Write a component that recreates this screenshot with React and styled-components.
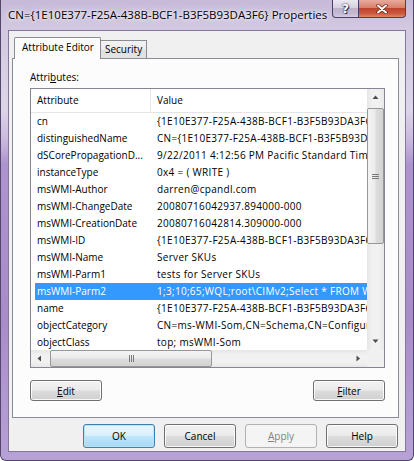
import React from 'react';
import styled, { createGlobalStyle, css } from 'styled-components';

const FONT = `"Open Sans", "Noto Sans", "Liberation Sans", sans-serif`;

const Global = createGlobalStyle`
  html, body { margin: 0; padding: 0; background: #fff; }
  body { font-family: ${FONT}; font-size: 10px; color: #000; }
  * { box-sizing: border-box; }
`;

const Window = styled.div`
  width: 414px;
  height: 461px;
  display: flex;
  flex-direction: column;
  padding: 0 7px 8px 7px;
  border: 1px solid #54466a;
  border-top: none;
  border-radius: 0 0 6px 6px;
  background: linear-gradient(
    180deg,
    #c6b9d9 0px,
    #d2c9e0 28px,
    #dcd5e8 110px,
    #c9b9de 140px,
    #ad93cf 165px,
    #a88cca 320px,
    #b7a2d6 461px
  );
`;

const TitleBar = styled.div`
  height: 30px;
  flex: none;
  display: flex;
  align-items: flex-start;
`;

const Title = styled.div`
  font-size: 11.5px;
  line-height: 30px;
  white-space: nowrap;
  color: #000;
  text-shadow: 0 0 6px rgba(255, 255, 255, 0.95), 0 0 3px rgba(255, 255, 255, 0.9);
`;

const Captions = styled.div`
  margin-left: auto;
  display: flex;
  height: 18px;
`;

const CaptionBtn = styled.div`
  height: 18px;
  display: flex;
  align-items: center;
  justify-content: center;
  border: 1px solid #4d3f63;
  border-top: none;
  ${(p) =>
    p.$close
      ? css`
          width: 47px;
          border-left: none;
          border-radius: 0 0 4px 0;
          background: linear-gradient(180deg, #e9a99b 0%, #d7806e 45%, #c0432d 50%, #cb5a3f 80%, #e08a66 100%);
        `
      : css`
          width: 27px;
          border-radius: 0 0 0 4px;
          background: linear-gradient(180deg, #ece8f2 0%, #d6d0e0 45%, #bdb3cd 50%, #c3b9d4 80%, #d5cde2 100%);
        `}
`;

const HelpGlyph = styled.span`
  font-family: "DejaVu Sans", sans-serif;
  font-weight: bold;
  font-size: 12px;
  line-height: 1;
  color: #fff;
  text-shadow: 0 0 1px #3d3350, 0 0 2px #3d3350, 1px 1px 0 #3d3350;
`;

const Client = styled.div`
  flex: 1;
  display: flex;
  flex-direction: column;
  background: #f0f0f0;
  border: 1px solid #84769c;
  padding: 6px 6px 3px 3px;
`;

const TabRow = styled.div`
  height: 21px;
  flex: none;
  display: flex;
  align-items: flex-end;
  padding-left: 2px;
`;

const Tab = styled.div`
  position: relative;
  border: 1px solid #898c95;
  border-bottom: none;
  white-space: nowrap;
  ${(p) =>
    p.$active
      ? css`
          z-index: 1;
          height: 22px;
          margin-bottom: -1px;
          padding: 0 6px 0 7px;
          line-height: 19px;
          background: #fcfcfc;
          border-radius: 2px 2px 0 0;
        `
      : css`
          height: 18px;
          padding: 0 4px 0 4px;
          line-height: 16px;
          border-left: none;
          background: linear-gradient(180deg, #f3f3f3 0%, #ebebeb 50%, #dedede 51%, #e4e4e4 100%);
        `}
`;

const Panel = styled.div`
  height: 360px;
  flex: none;
  display: flex;
  flex-direction: column;
  border: 1px solid #898c95;
  background: #fcfcfc;
  padding: 11px 13px 0 17px;
`;

const Label = styled.div`
  line-height: 14px;
  height: 14px;
`;

const ListView = styled.div`
  margin-top: 4px;
  height: 280px;
  flex: none;
  border: 1px solid #828790;
  display: grid;
  grid-template-columns: 1fr 17px;
  grid-template-rows: 1fr 17px;
  background: #fff;
`;

const ListContent = styled.div`
  overflow: hidden;
  min-width: 0;
  background: #fff;
`;

const Header = styled.div`
  height: 24px;
  display: flex;
  border-bottom: 1px solid #e5e5e5;
  line-height: 23px;
`;

const HeadCell = styled.div`
  padding-left: 6px;
  ${(p) =>
    p.$first
      ? css`
          width: 120px;
          flex: none;
          border-right: 1px solid #e5e5e5;
        `
      : css`
          flex: 1;
        `}
`;

const Row = styled.div`
  height: 17px;
  line-height: 17px;
  margin-left: 4px;
  display: flex;
  white-space: nowrap;
  ${(p) =>
    p.$selected &&
    css`
      background: #3399ff;
      color: #fff;
    `}
`;

const Cell = styled.div`
  overflow: hidden;
  ${(p) =>
    p.$first
      ? css`
          width: 116px;
          flex: none;
          padding-left: 2px;
        `
      : css`
          flex: 1;
          min-width: 0;
          padding-left: 6px;
          letter-spacing: 0.3px;
        `}
`;

const VScroll = styled.div`
  display: flex;
  flex-direction: column;
  background: linear-gradient(90deg, #e6e6e6 0%, #f1f1f1 30%, #f1f1f1 70%, #e8e8e8 100%);
`;

const HScroll = styled.div`
  display: flex;
  background: linear-gradient(180deg, #e6e6e6 0%, #f1f1f1 30%, #f1f1f1 70%, #e8e8e8 100%);
`;

const Arrow = styled.div`
  width: 17px;
  height: 17px;
  flex: none;
  display: flex;
  align-items: center;
  justify-content: center;
  ${(p) => p.$end && css`margin-${p.$dir === 'v' ? 'top' : 'left'}: auto;`}
`;

const Thumb = styled.div`
  flex: none;
  display: flex;
  align-items: center;
  justify-content: center;
  border: 1px solid #979797;
  border-radius: 2px;
  ${(p) =>
    p.$dir === 'v'
      ? css`
          margin: 2px 0 0 0;
          width: 17px;
          height: 136px;
          background: linear-gradient(90deg, #f4f4f4 0%, #ececec 45%, #dcdcdc 55%, #d2d2d2 100%);
        `
      : css`
          margin: 0 0 0 2px;
          height: 17px;
          width: 162px;
          background: linear-gradient(180deg, #f4f4f4 0%, #ececec 45%, #dcdcdc 55%, #d2d2d2 100%);
        `}
`;

const Corner = styled.div`
  background: #f0f0f0;
`;

const ActionRow = styled.div`
  margin-top: 12px;
  display: flex;
  justify-content: space-between;
`;

const Button = styled.button`
  font-family: ${FONT};
  font-size: 10px;
  color: #000;
  width: 72px;
  height: ${(p) => (p.$tall ? 24 : 21)}px;
  padding: 0;
  border-radius: 3px;
  border: 1px solid #707070;
  box-shadow: inset 0 0 0 1px rgba(255, 255, 255, 0.85);
  background: linear-gradient(180deg, #f2f2f2 0%, #ebebeb 48%, #dddddd 52%, #cfcfcf 100%);
  ${(p) =>
    p.$default &&
    css`
      border-color: #3c7fb1;
      box-shadow: inset 0 0 0 1px #b7e4fb;
      background: linear-gradient(180deg, #eaf6fd 0%, #d9f0fc 48%, #bee6fd 52%, #a7d9f5 100%);
    `}
  ${(p) =>
    p.disabled &&
    css`
      color: #838383;
      border-color: #adb2b5;
      box-shadow: none;
      background: #f4f4f4;
    `}
  u { text-decoration: underline; }
`;

const Footer = styled.div`
  margin-top: 6px;
  display: flex;
  justify-content: flex-end;
  gap: 9px;
  padding-right: 1px;
`;

const TriIcon = ({ dir }) => {
  const pts = {
    up: '0.5,4 3.5,0.5 6.5,4',
    down: '0.5,0.5 3.5,4 6.5,0.5',
    left: '4,0.5 0.5,3.5 4,6.5',
    right: '0.5,0.5 4,3.5 0.5,6.5',
  }[dir];
  const vert = dir === 'up' || dir === 'down';
  return (
    <svg width={vert ? 7 : 5} height={vert ? 5 : 7} viewBox={vert ? '0 0 7 5' : '0 0 5 7'}>
      <polygon points={pts} fill="#4d4d4d" />
    </svg>
  );
};

const Grip = ({ dir }) =>
  dir === 'v' ? (
    <svg width="7" height="7" viewBox="0 0 7 7">
      {[1, 3, 5].map((y) => (
        <line key={y} x1="0" x2="7" y1={y + 0.5} y2={y + 0.5} stroke="#7a7a7a" />
      ))}
    </svg>
  ) : (
    <svg width="7" height="7" viewBox="0 0 7 7">
      {[1, 3, 5].map((x) => (
        <line key={x} y1="0" y2="7" x1={x + 0.5} x2={x + 0.5} stroke="#7a7a7a" />
      ))}
    </svg>
  );

const rows = [
  ['cn', '{1E10E377-F25A-438B-BCF1-B3F5B93DA3F6}'],
  ['distinguishedName', 'CN={1E10E377-F25A-438B-BCF1-B3F5B93DA3F6},CN=SOM,CN=WMIPolicy,CN=System'],
  ['dSCorePropagationD...', '9/22/2011 4:12:56 PM Pacific Standard Time'],
  ['instanceType', '0x4 = ( WRITE )'],
  ['msWMI-Author', 'darren@cpandl.com'],
  ['msWMI-ChangeDate', '20080716042937.894000-000'],
  ['msWMI-CreationDate', '20080716042814.309000-000'],
  ['msWMI-ID', '{1E10E377-F25A-438B-BCF1-B3F5B93DA3F6}'],
  ['msWMI-Name', 'Server SKUs'],
  ['msWMI-Parm1', 'tests for Server SKUs'],
  ['msWMI-Parm2', '1;3;10;65;WQL;root\\CIMv2;Select * FROM Win32_OperatingSystem', true],
  ['name', '{1E10E377-F25A-438B-BCF1-B3F5B93DA3F6}'],
  ['objectCategory', 'CN=ms-WMI-Som,CN=Schema,CN=Configuration,DC=cpandl,DC=com'],
  ['objectClass', 'top; msWMI-Som'],
];

const CloseGlyph = () => (
  <svg width="12" height="10" viewBox="0 0 12 10">
    <path d="M2 1.5 L10 8.5 M10 1.5 L2 8.5" stroke="#6b1e12" strokeWidth="3.4" strokeLinecap="round" />
    <path d="M2 1.5 L10 8.5 M10 1.5 L2 8.5" stroke="#ffffff" strokeWidth="2" strokeLinecap="round" />
  </svg>
);

export default function App() {
  return (
    <>
      <Global />
      <Window>
        <TitleBar>
          <Title>CN={'{'}1E10E377-F25A-438B-BCF1-B3F5B93DA3F6{'}'} Properties</Title>
          <Captions>
            <CaptionBtn>
              <HelpGlyph>?</HelpGlyph>
            </CaptionBtn>
            <CaptionBtn $close>
              <CloseGlyph />
            </CaptionBtn>
          </Captions>
        </TitleBar>
        <Client>
          <TabRow>
            <Tab $active>Attribute Editor</Tab>
            <Tab>Security</Tab>
          </TabRow>
          <Panel>
            <Label>
              Attri<u>b</u>utes:
            </Label>
            <ListView>
              <ListContent>
                <Header>
                  <HeadCell $first>Attribute</HeadCell>
                  <HeadCell>Value</HeadCell>
                </Header>
                {rows.map(([a, v, sel]) => (
                  <Row key={a} $selected={sel}>
                    <Cell $first>{a}</Cell>
                    <Cell>{v}</Cell>
                  </Row>
                ))}
              </ListContent>
              <VScroll>
                <Arrow>
                  <TriIcon dir="up" />
                </Arrow>
                <Thumb $dir="v">
                  <Grip dir="v" />
                </Thumb>
                <Arrow $end $dir="v">
                  <TriIcon dir="down" />
                </Arrow>
              </VScroll>
              <HScroll>
                <Arrow>
                  <TriIcon dir="left" />
                </Arrow>
                <Thumb $dir="h">
                  <Grip dir="h" />
                </Thumb>
                <Arrow $end $dir="h">
                  <TriIcon dir="right" />
                </Arrow>
              </HScroll>
              <Corner />
            </ListView>
            <ActionRow>
              <Button>
                <u>E</u>dit
              </Button>
              <Button>
                <u>F</u>ilter
              </Button>
            </ActionRow>
          </Panel>
          <Footer>
            <Button $tall $default>
              OK
            </Button>
            <Button $tall>Cancel</Button>
            <Button $tall disabled>
              <u>A</u>pply
            </Button>
            <Button $tall>Help</Button>
          </Footer>
        </Client>
      </Window>
    </>
  );
}
